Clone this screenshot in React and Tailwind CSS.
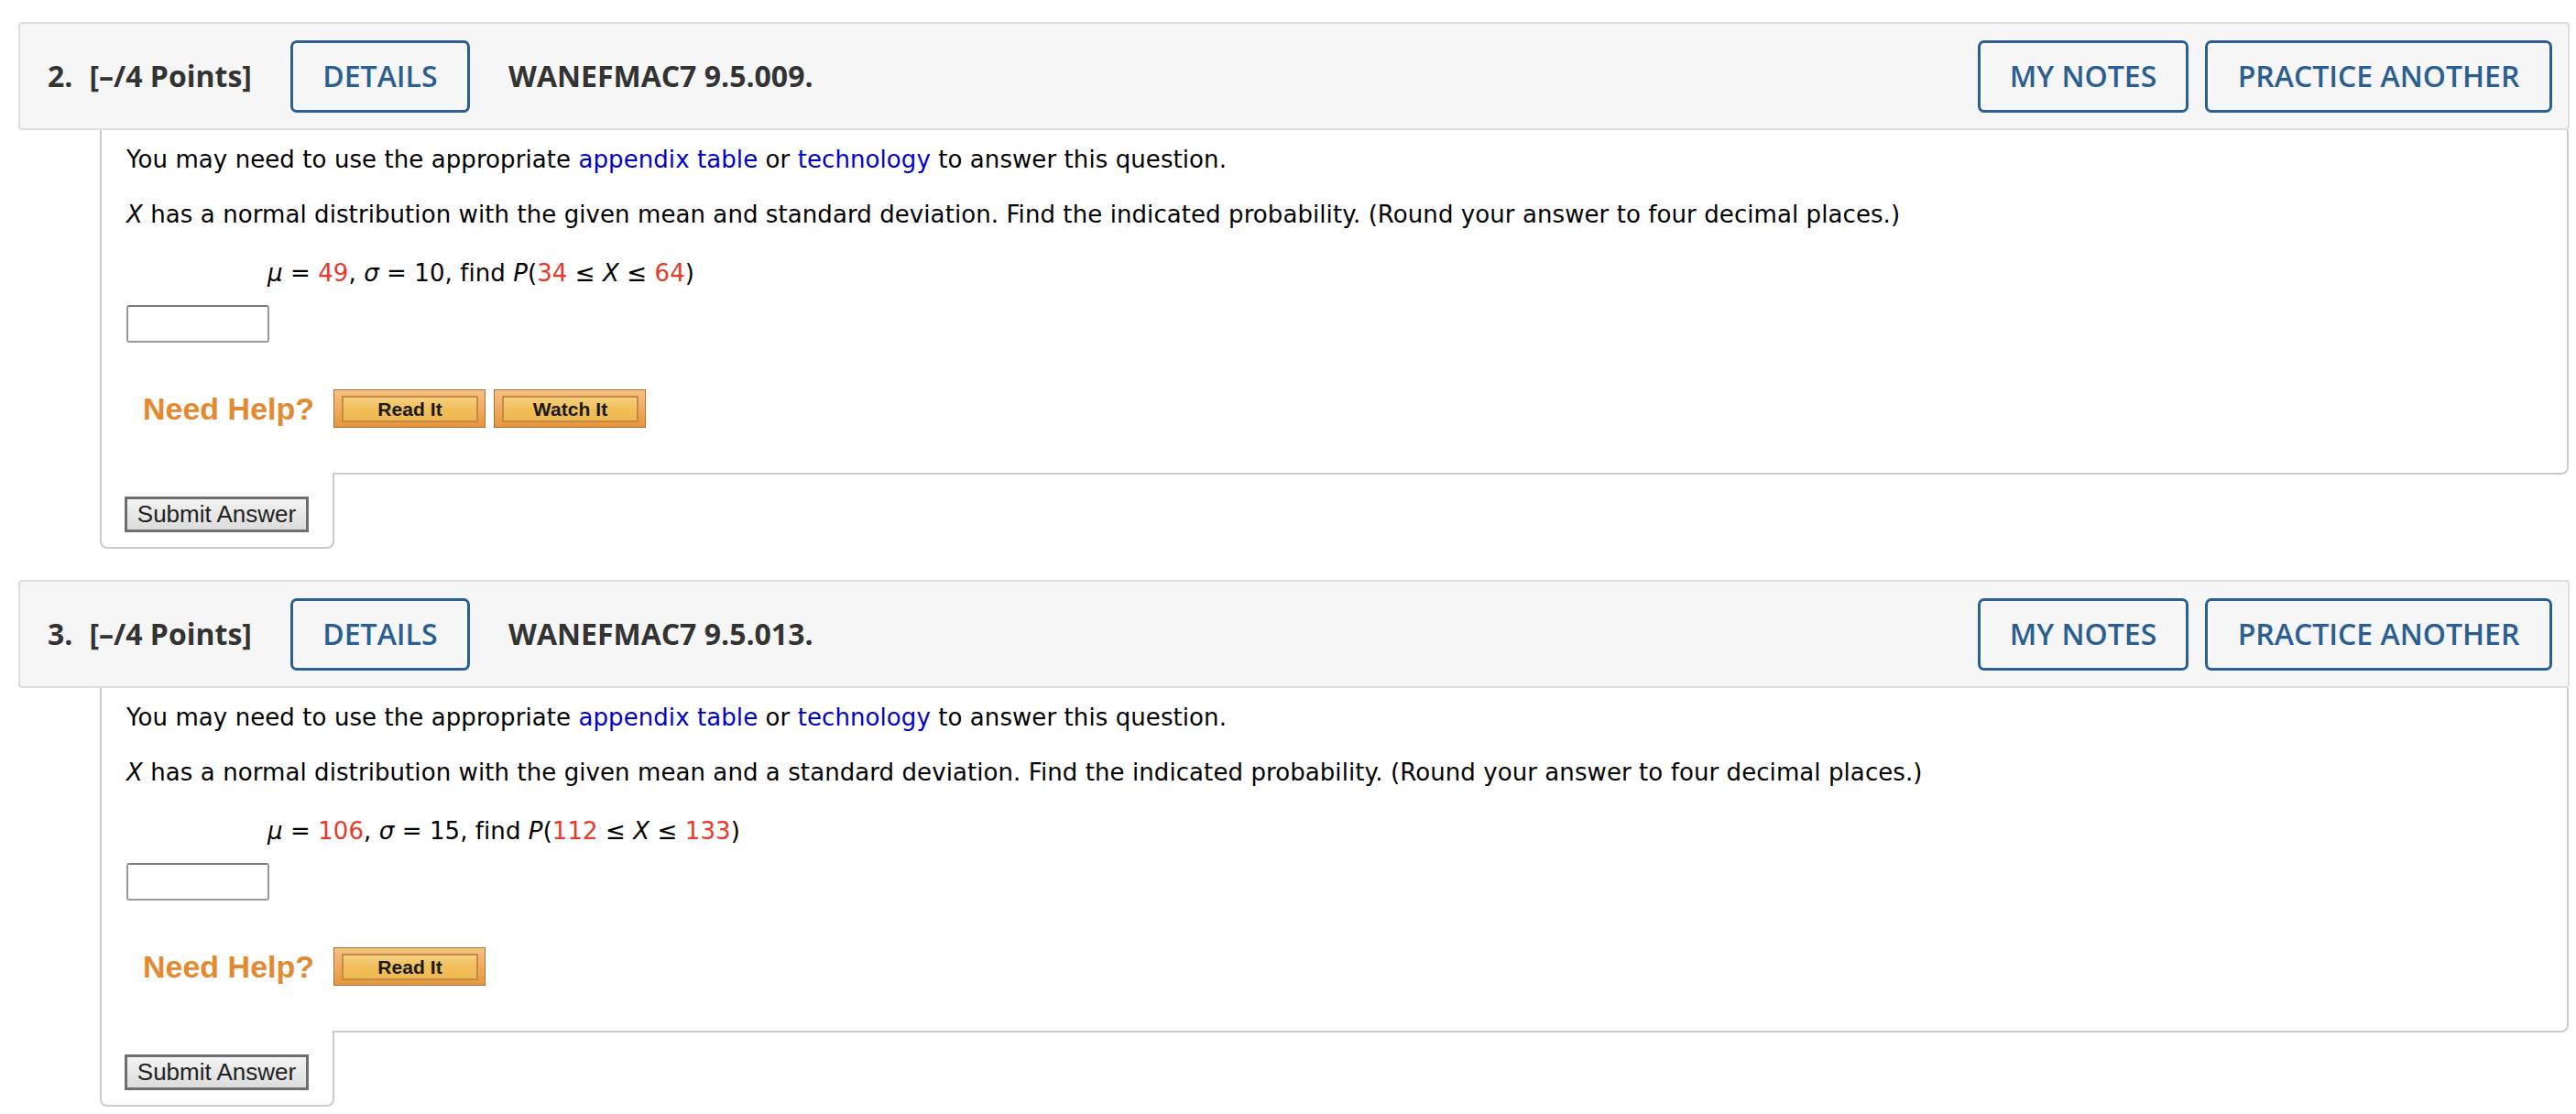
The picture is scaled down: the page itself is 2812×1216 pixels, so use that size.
import React from 'react';

const questions = [
    {
        num: '2',
        code: 'WANEFMAC7 9.5.009.',
        line2: 'has a normal distribution with the given mean and standard deviation. Find the indicated probability. (Round your answer to four decimal places.)',
        mu: '49',
        sigma: '10',
        lo: '34',
        hi: '64',
        watch: true,
    },
    {
        num: '3',
        code: 'WANEFMAC7 9.5.013.',
        line2: 'has a normal distribution with the given mean and a standard deviation. Find the indicated probability. (Round your answer to four decimal places.)',
        mu: '106',
        sigma: '15',
        lo: '112',
        hi: '133',
        watch: false,
    },
];

function OutlineButton({ children, className }) {
    return (
        <button
            className={`h-[79px] border-[3px] border-[#2b5f92] rounded-[7px] text-[#2b5f92] text-[32px] font-semibold flex items-center justify-center ${className}`}
        >
            {children}
        </button>
    );
}

function HelpButton({ label }) {
    return (
        <div className="w-[166px] h-[42px] border border-[#a8733a] bg-gradient-to-b from-[#f8c080] to-[#e8963a] pt-[6px] pb-[5px] pl-[8px] pr-[7px]">
            <div className="h-full border-2 border-[#c28c48] bg-gradient-to-b from-[#f6d080] via-[#f2be58] to-[#efb952] flex items-center justify-center">
                <span className="text-[21px] font-bold text-[#1a1a1a] leading-none" style={{ fontFamily: '"Liberation Sans", Arial, sans-serif' }}>
                    {label}
                </span>
            </div>
        </div>
    );
}

function Question({ q, first }) {
    return (
        <div className={first ? '' : 'mt-[34px]'}>
            {/* Header bar */}
            <div
                className="ml-[20px] mr-[7px] h-[118px] bg-[#f6f6f6] border-2 border-[#dedede] rounded-[4px] flex items-center pl-[30px] pr-[17px] text-[#333333]"
                style={{ fontFamily: '"Open Sans", sans-serif' }}
            >
                <span className="text-[32px] font-bold">{q.num}.</span>
                <span className="ml-[18px] text-[32px] font-bold">[–/4 Points]</span>
                <OutlineButton className="ml-[42px] w-[196px]">DETAILS</OutlineButton>
                <span className="ml-[42px] text-[32px] font-bold">{q.code}</span>
                <div className="flex-1" />
                <OutlineButton className="w-[230px]">MY NOTES</OutlineButton>
                <OutlineButton className="ml-[18px] w-[379px]">PRACTICE ANOTHER</OutlineButton>
            </div>

            {/* Question body */}
            <div
                className="ml-[109px] mr-[8px] border-x-2 border-b-2 border-[#cccccc] rounded-br-[8px] pt-[16px] pl-[27px] pb-[49px] text-black text-[26px] leading-[32px] tracking-[0.08px]"
                style={{ fontFamily: '"DejaVu Sans", Verdana, sans-serif' }}
            >
                <p>
                    You may need to use the appropriate <span className="text-[#0000cc]">appendix table</span> or{' '}
                    <span className="text-[#0000cc]">technology</span> to answer this question.
                </p>
                <p className="mt-[28px]">
                    <i>X</i> {q.line2}
                </p>
                <p className="mt-[32px] pl-[154px]">
                    <i>μ</i> = <span className="text-[#e8392b]">{q.mu}</span>, <i>σ</i> = {q.sigma}, find <i>P</i>(
                    <span className="text-[#e8392b]">{q.lo}</span> ≤ <i>X</i> ≤ <span className="text-[#e8392b]">{q.hi}</span>)
                </p>
                <div className="mt-[19px] w-[156px] h-[41px] border-2 border-[#9a9a9a] border-t-[#7a7a7a] rounded-[3px] bg-white" />
                <div className="mt-[51px] ml-[18px] flex items-center">
                    <span
                        className="text-[34px] font-bold text-[#e38a30] mr-[21px] leading-none tracking-normal"
                        style={{ fontFamily: '"Liberation Sans", Arial, sans-serif' }}
                    >
                        Need Help?
                    </span>
                    <HelpButton label="Read It" />
                    {q.watch && (
                        <div className="ml-[9px]">
                            <HelpButton label="Watch It" />
                        </div>
                    )}
                </div>
            </div>

            {/* Submit tab */}
            <div className="relative -mt-[2px] ml-[109px] w-[256px] bg-white border-x-2 border-b-2 border-[#cccccc] rounded-b-[8px] pt-[26px] pb-[16px] pl-[25px]">
                <button
                    className="w-[201px] h-[39px] border-[3px] border-[#6e6e6e] bg-gradient-to-b from-[#f4f4f4] to-[#dcdcdc] text-[26px] text-[#222] flex items-center justify-center"
                    style={{ fontFamily: '"Liberation Sans", Arial, sans-serif' }}
                >
                    Submit Answer
                </button>
            </div>
        </div>
    );
}

export default function App() {
    return (
        <div className="min-h-[1216px] bg-white pt-[24px]">
            {questions.map((q, i) => (
                <Question key={q.num} q={q} first={i === 0} />
            ))}
        </div>
    );
}
